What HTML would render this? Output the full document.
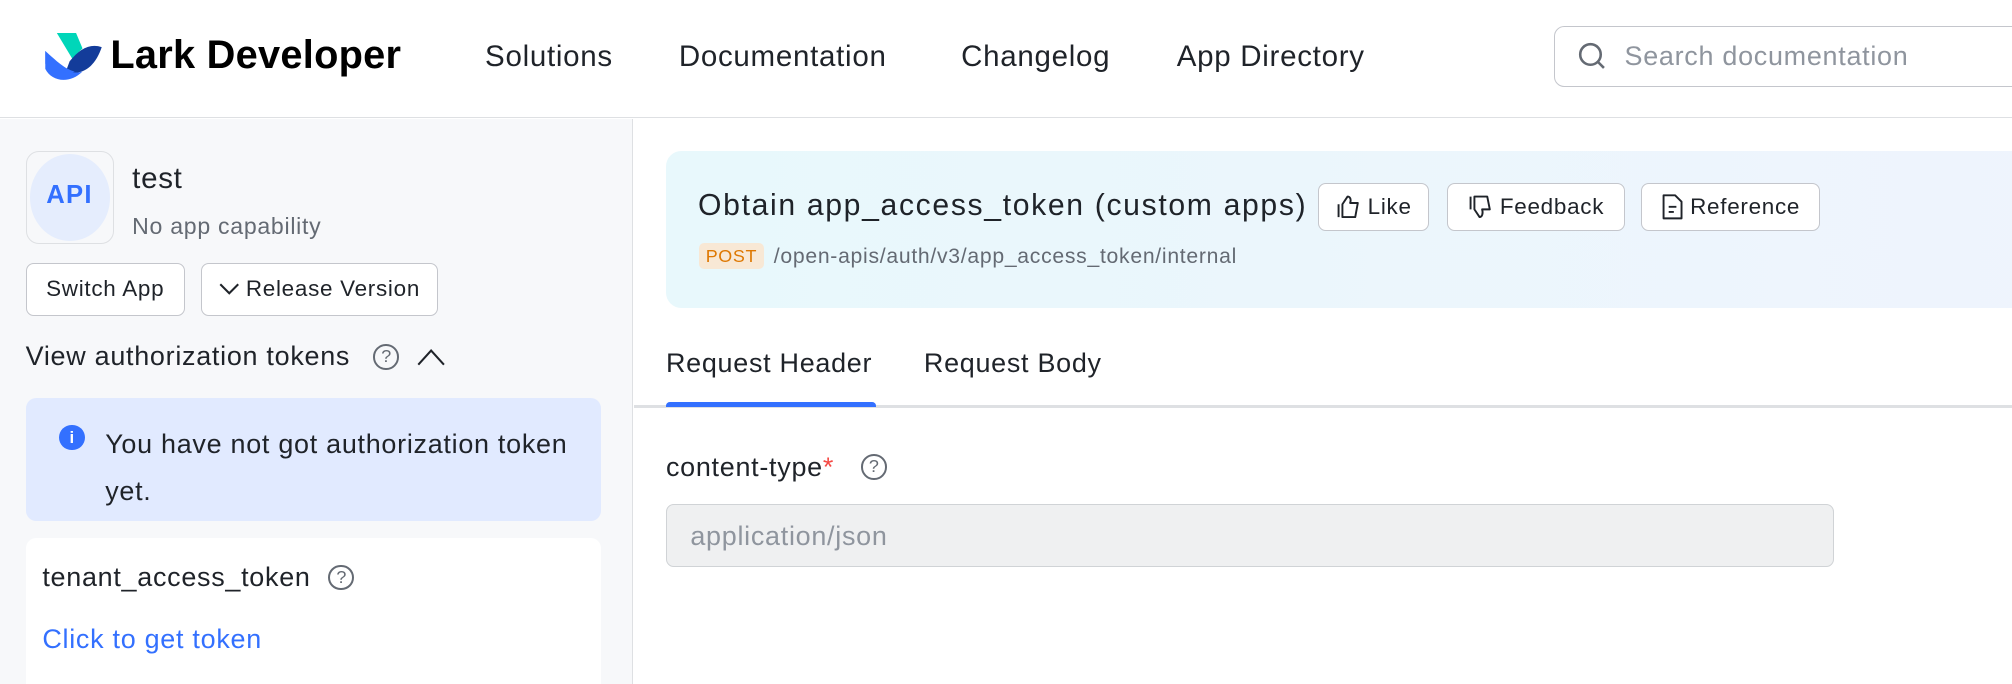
<!DOCTYPE html>
<html><head><meta charset="utf-8"><style>
*{margin:0;padding:0;box-sizing:border-box}
html,body{width:2012px;height:684px;overflow:hidden;background:#fff}
#w{zoom:1.2832;width:1568px;height:533px;position:relative;font-family:"Liberation Sans",Helvetica,Arial,sans-serif;color:#1f2329;letter-spacing:0.035em}
.a{position:absolute;white-space:nowrap}
.btn{position:absolute;border:1px solid #c4c6cc;border-radius:6px;background:#fff;font-size:17.5px;display:flex;align-items:center;justify-content:center;gap:5px}
.q{display:inline-block;width:20px;height:20px;border:1.6px solid #646a73;border-radius:50%;font-size:14px;color:#646a73;text-align:center;line-height:17px;font-weight:normal;letter-spacing:0}
</style></head><body><div id="w">
<div class="a" style="left:0;top:0;width:1568px;height:92px;border-bottom:1px solid #dee0e3;background:#fff"></div>
<svg class="a" style="left:34px;top:26px" width="46" height="38" viewBox="0 0 46 38">
<path d="M10 0 H25 L30 12 L22 20 Z" fill="#00d6b9"/>
<path d="M20 22 C28 12 36 8 45 11 C40 26 30 34 17 30 Z" fill="#133c9a"/>
<path d="M1 14 L1 28 C6 38 20 40 30 30 C22 33 14 28 1 14 Z" fill="#3370ff"/>
<path d="M1 14 C10 22 16 28 24 30 C16 33 8 30 1 24 Z" fill="#3370ff"/>
</svg>
<div class="a" style="left:86px;top:26px;font-size:31px;font-weight:bold;color:#000;letter-spacing:0.2px">Lark Developer</div>
<div class="a" style="left:378px;top:31px;font-size:23px">Solutions</div>
<div class="a" style="left:529px;top:31px;font-size:23px">Documentation</div>
<div class="a" style="left:749px;top:31px;font-size:23px">Changelog</div>
<div class="a" style="left:917px;top:31px;font-size:23px">App Directory</div>
<div class="a" style="left:1211px;top:20px;width:400px;height:48px;border:1px solid #c4c6cc;border-radius:8px"></div>
<svg class="a" style="left:1229px;top:32px" width="24" height="24" viewBox="0 0 24 24"><circle cx="10.5" cy="10.5" r="8" fill="none" stroke="#646a73" stroke-width="2"/><path d="M16 16 L21 21" stroke="#646a73" stroke-width="2"/></svg>
<div class="a" style="left:1266px;top:32px;font-size:21px;color:#8f959e">Search documentation</div>

<div class="a" style="left:0;top:93px;width:493px;height:440px;background:#f7f8fa;border-right:1px solid #dee0e3"></div>
<div class="a" style="left:20px;top:118px;width:69px;height:72px;border:1px solid #dee0e3;border-radius:10px;background:#f7f8fa"></div>
<div class="a" style="left:23px;top:120px;width:63px;height:68px;border-radius:50%;background:#e5edfd"></div>
<div class="a" style="left:36px;top:141px;font-size:20px;font-weight:bold;color:#3370ff;letter-spacing:1px">API</div>
<div class="a" style="left:103px;top:126px;font-size:23px">test</div>
<div class="a" style="left:103px;top:166px;font-size:18px;color:#646a73">No app capability</div>
<div class="btn" style="left:20px;top:205px;width:124px;height:41px">Switch App</div>
<div class="btn" style="left:157px;top:205px;width:184px;height:41px"><svg width="16" height="10" viewBox="0 0 16 10"><path d="M1 1 L8 8 L15 1" fill="none" stroke="#1f2329" stroke-width="1.6"/></svg>Release Version</div>
<div class="a" style="left:20px;top:266px;font-size:21px">View authorization tokens</div>
<span class="a q" style="left:291px;top:268px">?</span>
<svg class="a" style="left:325px;top:271px" width="22" height="14" viewBox="0 0 22 14"><path d="M1 13 L11 2 L21 13" fill="none" stroke="#1f2329" stroke-width="1.6"/></svg>
<div class="a" style="left:20px;top:310px;width:448px;height:96px;background:#e1eaff;border-radius:8px"></div>
<div class="a" style="left:46px;top:331px;width:20px;height:20px;border-radius:50%;background:#3370ff;color:#fff;font-size:13px;font-weight:bold;text-align:center;line-height:20px;letter-spacing:0">i</div>
<div class="a" style="left:82px;top:328px;font-size:21px;line-height:37px">You have not got authorization token<br>yet.</div>
<div class="a" style="left:20px;top:419px;width:448px;height:130px;background:#fff;border-radius:8px"></div>
<div class="a" style="left:33px;top:438px;font-size:21px">tenant_access_token</div>
<span class="a q" style="left:256px;top:440px">?</span>
<div class="a" style="left:33px;top:486px;font-size:21px;color:#3370ff">Click to get token</div>

<div class="a" style="left:519px;top:118px;width:1100px;height:122px;border-radius:12px;background:linear-gradient(90deg,#e8f8fc,#eff4fd)"></div>
<div class="a" style="left:544px;top:147px;font-size:23.5px;letter-spacing:0.055em">Obtain app_access_token (custom apps)</div>
<div class="btn" style="left:1027px;top:143px;width:87px;height:37px"><svg width="20" height="20" viewBox="0 0 20 20"><path d="M2 8 V18 M5 8 L9 2 C11 2 12 4 11 7 H17 L15 18 H5 Z" fill="none" stroke="#1f2329" stroke-width="1.5" stroke-linejoin="round"/></svg>Like</div>
<div class="btn" style="left:1128px;top:143px;width:138px;height:37px"><svg width="20" height="20" viewBox="0 0 20 20"><path d="M2 2 V12 M5 2 H15 L17 12 H11 C12 15 11 18 9 18 L5 12 Z" fill="none" stroke="#1f2329" stroke-width="1.5" stroke-linejoin="round"/></svg>Feedback</div>
<div class="btn" style="left:1279px;top:143px;width:139px;height:37px"><svg width="18" height="20" viewBox="0 0 18 20"><path d="M2 1 H11 L16 6 V19 H2 Z M6 10 H12 M6 14 H10" fill="none" stroke="#1f2329" stroke-width="1.5" stroke-linejoin="round"/></svg>Reference</div>
<div class="a" style="left:545px;top:189px;width:50px;height:21px;background:#f8e8d5;border-radius:4px;color:#de7802;font-size:14px;text-align:center;line-height:21px;letter-spacing:0.5px">POST</div>
<div class="a" style="left:603px;top:191px;font-size:16.5px;color:#646a73">/open-apis/auth/v3/app_access_token/internal</div>

<div class="a" style="left:519px;top:271px;font-size:21px">Request Header</div>
<div class="a" style="left:720px;top:271px;font-size:21px">Request Body</div>
<div class="a" style="left:494px;top:316px;width:1074px;height:2px;background:#dee0e3"></div>
<div class="a" style="left:519px;top:313px;width:164px;height:4px;background:#3370ff;border-radius:3px 3px 0 0"></div>
<div class="a" style="left:519px;top:352px;font-size:21px">content-type<span style="color:#f54a45">*</span></div>
<span class="a q" style="left:671px;top:354px">?</span>
<div class="a" style="left:519px;top:393px;width:910px;height:49px;background:#eff0f1;border:1px solid #d0d3d6;border-radius:6px"></div>
<div class="a" style="left:538px;top:406px;font-size:21px;color:#8f959e">application/json</div>
</div></body></html>
